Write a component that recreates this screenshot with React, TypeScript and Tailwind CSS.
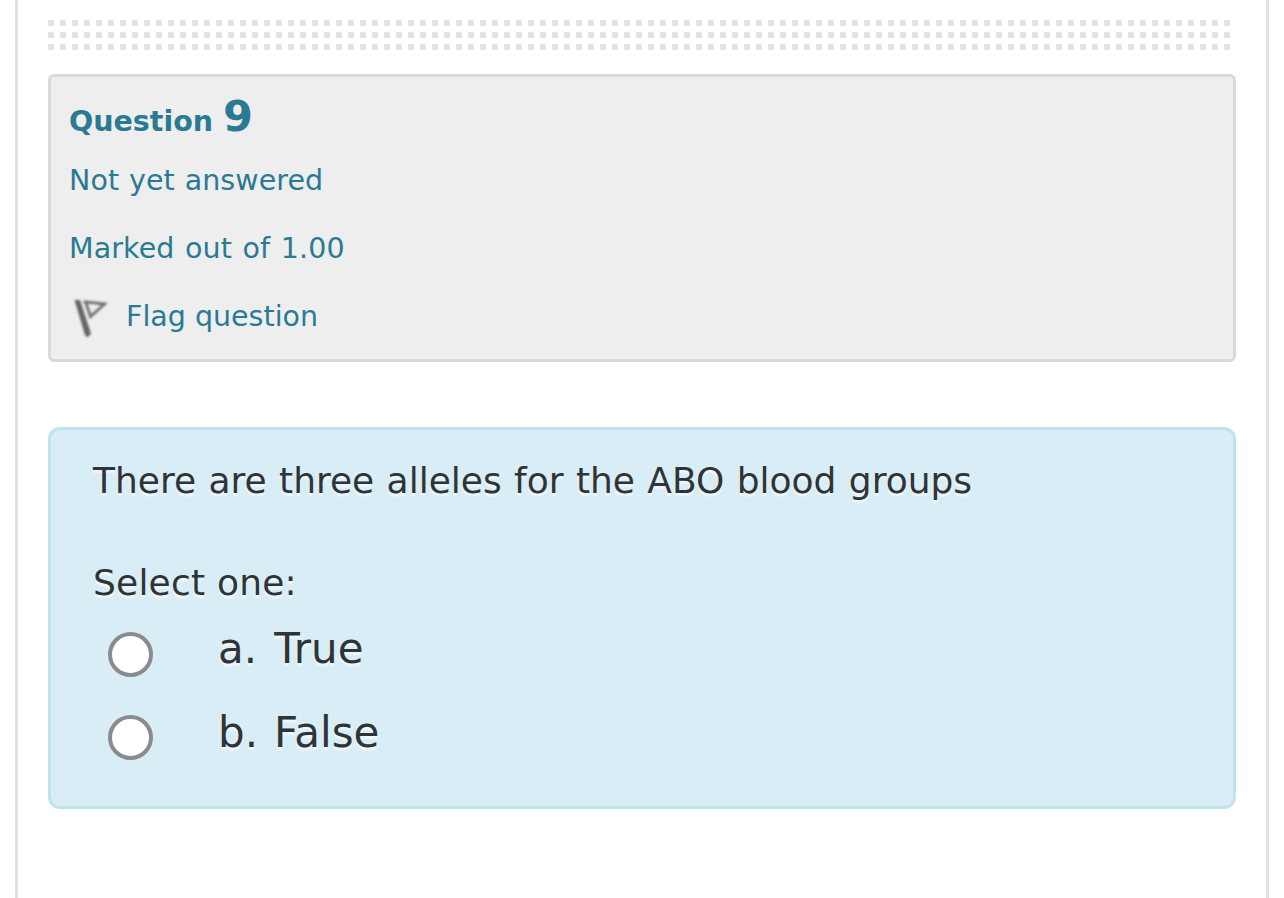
import React from 'react';

const answers = [
  { id: 'a', label: 'a. True', radio: 'mt-[11px]', text: 'tracking-[0.1px] [word-spacing:3.4px]' },
  { id: 'b', label: 'b. False', radio: 'mt-[10px]', text: '[word-spacing:2.6px]' },
];

const DottedDivider: React.FC = () => (
  <svg className="block w-full h-[30px]" aria-hidden="true">
    <defs>
      <pattern id="dots" width="12" height="12" patternUnits="userSpaceOnUse">
        <rect width="6" height="6" rx="0.8" fill="#e3e3e3" />
      </pattern>
    </defs>
    <rect width="100%" height="100%" fill="url(#dots)" />
  </svg>
);

const FlagIcon: React.FC = () => (
  <svg className="w-[48px] h-[48px] shrink-0 blur-[0.8px]" viewBox="0 0 48 48" fill="none">
    <path d="M5.5 7L11 7L22 40.5L18.5 44.5L16 42Z" fill="#666" />
    <path d="M14.5 8.8L35.5 11L21.5 23.5L17 10" stroke="#757575" strokeWidth="3" />
  </svg>
);

const App: React.FC = () => {
  return (
    <div className="h-[898px] overflow-hidden bg-white font-['DejaVu_Sans',sans-serif]">
      <main className="ml-[15px] w-[1254px] h-full border-x-[3px] border-[#e2e2e2] px-[30px] pt-5">
        <DottedDivider />

        {/* Question info */}
        <section className="mt-6 h-[288px] rounded-[6px] border-[3px] border-[#dadada] bg-[#eee] pl-[18px] pt-[13px] text-[28.5px] leading-[40px] text-[#2a7a94]">
          <h3 className="h-[52px] leading-[52px] font-bold whitespace-nowrap">
            <span>Question </span>
            <span className="text-[43px]">9</span>
          </h3>
          <div className="mt-[19px]"><span className="tracking-[0.08px] [word-spacing:0.7px]">Not yet answered</span></div>
          <div className="mt-7"><span className="tracking-[0.1px] [word-spacing:1.4px]">Marked out of 1.00</span></div>
          <div className="mt-7 flex h-10 items-center">
            <FlagIcon />
            <span className="ml-[9px]">Flag question</span>
          </div>
        </section>

        {/* Question content */}
        <section className="mt-[65px] h-[382px] rounded-[12px] border-[3px] border-[#bfe4ee] bg-[#d8edf6] pl-[42px] pt-[27px] text-[36px] leading-[48px] text-[#2f3437] [text-shadow:0_3px_2px_rgba(255,255,255,0.6)]">
          <p><span className="[word-spacing:0.9px]">There are three alleles for the ABO blood groups</span></p>
          <p className="mt-[54px]"><span className="tracking-[0.2px]">Select one:</span></p>
          <div className="mt-[14px]">
            {answers.map((answer) => (
              <label key={answer.id} className="flex h-[84px] pl-[15px] text-[42px] leading-[56px]">
                <input
                  type="radio"
                  name="answer"
                  className={`${answer.radio} size-[45px] shrink-0 appearance-none rounded-full border-[4px] border-[#8a8b90] bg-white`}
                />
                <span className={`ml-[65px] ${answer.text}`}>{answer.label}</span>
              </label>
            ))}
          </div>
        </section>
      </main>
    </div>
  );
};

export default App;
